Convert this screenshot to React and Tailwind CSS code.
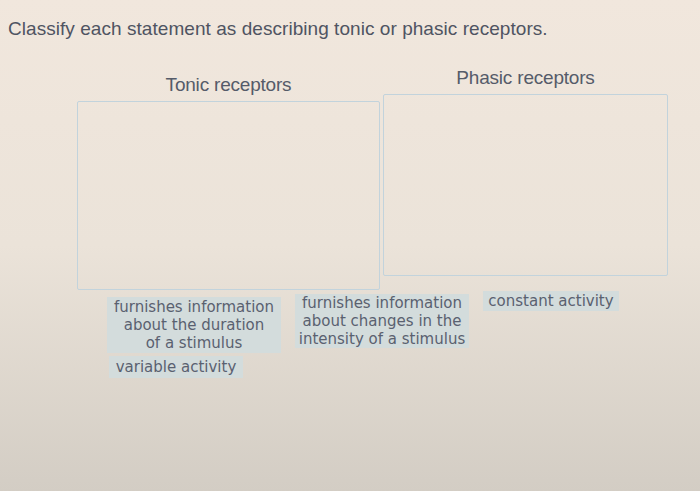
import React from 'react';

const Chip = ({ children, className = '' }) => (
  <div className={`bg-[#d3dcdc] px-[2px] text-center text-[15px] leading-[18px] text-[#5a6170] ${className}`}>
    {children}
  </div>
);

const App = () => {
  return (
    <div
      className="w-[700px] h-[491px] overflow-hidden bg-gradient-to-b from-[#f1e7dd] via-[#ebe3d9] to-[#d3cdc4] text-[#555b69]"
      style={{ fontFamily: '"Liberation Sans", Arial, sans-serif' }}
    >
      <div className="pt-[17px] pl-[8px] text-[19px] leading-[24px] tracking-[0.05px] text-[#4f5462]">
        Classify each statement as describing tonic or phasic receptors.
      </div>

      <div className="mt-[32px] ml-[77px] flex gap-[3px]">
        <div className="flex w-[303px] flex-col">
          <div className="mb-[4px] text-center text-[19px] leading-[24px] tracking-[-0.2px]">Tonic receptors</div>
          <div className="h-[189px] border border-[#c2d3dc] rounded-[2px]" />
        </div>
        <div className="flex w-[285px] flex-col -mt-[7px]">
          <div className="mb-[4px] text-center text-[19px] leading-[24px] tracking-[-0.2px]">Phasic receptors</div>
          <div className="h-[182px] border border-[#c2d3dc] rounded-[2px]" />
        </div>
      </div>

      <div
        className="mt-[5px] ml-[107px] w-[540px]"
        style={{ fontFamily: '"DejaVu Sans", Verdana, sans-serif' }}
      >
        <div className="flex items-start gap-[14px]">
          <Chip className="w-[174px] mt-[2px] py-[1px]">
            furnishes information
            <br />
            about the duration
            <br />
            of a stimulus
          </Chip>
          <Chip className="w-[174px] -mt-[1px]">
            furnishes information
            <br />
            about changes in the
            <br />
            intensity of a stimulus
          </Chip>
          <Chip className="w-[136px] -mt-[4px] py-[1px]">constant activity</Chip>
        </div>
        <div className="mt-[3px] ml-[2px] flex">
          <Chip className="w-[134px] py-[2px]">variable activity</Chip>
        </div>
      </div>
    </div>
  );
};

export default App;
